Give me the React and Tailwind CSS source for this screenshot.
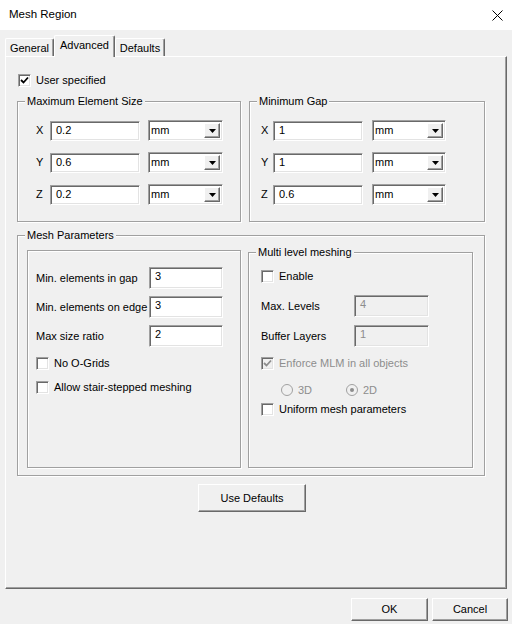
import React from 'react'

const sunken =
    'border border-t-[#a0a0a0] border-l-[#a0a0a0] border-r-white border-b-white shadow-[inset_1px_1px_0_#696969,inset_-1px_-1px_0_#e3e3e3]'
const raised =
    'border border-t-white border-l-white border-r-[#696969] border-b-[#696969] shadow-[inset_-1px_-1px_0_#a0a0a0]'
const etched = 'border border-[#a0a0a0] shadow-[inset_1px_1px_0_#fff,1px_1px_0_#fff]'

const Check = ({ checked, disabled }) => (
    <span
        className={`w-[13px] h-[13px] shrink-0 flex items-center justify-center ${sunken} ${
            disabled ? 'bg-[#f0f0f0]' : 'bg-white'
        }`}
    >
        {checked && (
            <svg width="9" height="9" viewBox="0 0 9 9">
                <path
                    d="M1 4 L3.5 6.5 L8 1.5"
                    fill="none"
                    stroke={disabled ? '#8d8d8d' : '#000'}
                    strokeWidth="1.8"
                />
            </svg>
        )}
    </span>
)

const Radio = ({ checked }) => (
    <svg width="12" height="12" viewBox="0 0 12 12" className="shrink-0">
        <circle cx="6" cy="6" r="5.5" fill="#f0f0f0" stroke="#a0a0a0" />
        {checked && <circle cx="6" cy="6" r="2" fill="#8d8d8d" />}
    </svg>
)

const Field = ({ value, w, h = 'h-[20px]', disabled }) => (
    <div
        className={`${w} ${h} ${sunken} ${
            disabled ? 'bg-[#f0f0f0] text-[#8d8d8d]' : 'bg-white'
        } pl-[5px] pt-[2px] leading-[13px] shrink-0`}
    >
        {value}
    </div>
)

const Combo = ({ w, ml }) => (
    <div className={`${w} ${ml} h-[21px] ${sunken} bg-white flex items-center shrink-0 pr-[2px]`}>
        <span className="flex-1 pl-[2px] leading-[13px]">mm</span>
        <span className={`w-[16px] h-[15px] bg-[#f0f0f0] ${raised} flex items-center justify-center`}>
            <svg width="7" height="4" viewBox="0 0 7 4">
                <path d="M0 0 H7 L3.5 4 Z" fill="#000" />
            </svg>
        </span>
    </div>
)

const Group = ({ label, className, children }) => (
    <div className={`relative ${etched} ${className}`}>
        {label && (
            <span className="absolute left-[7px] -top-[7px] px-[2px] bg-[#f0f0f0] leading-[13px]">
                {label}
            </span>
        )}
        {children}
    </div>
)

const AxisRows = ({ rows, labelW, comboW, comboMl }) => (
    <div className="flex flex-col gap-[11px]">
        {rows.map(([axis, value]) => (
            <div key={axis} className="flex items-center h-[21px]">
                <span className={labelW}>{axis}</span>
                <Field value={value} w="w-[90px]" />
                <Combo w={comboW} ml={comboMl} />
            </div>
        ))}
    </div>
)

const Tab = ({ label, active, w }) => (
    <div
        className={`${w} ${
            active ? 'h-[22px] -mb-px z-10 pt-[3px]' : 'h-[18px] pt-[3px]'
        } relative bg-[#f0f0f0] border-t border-l border-r border-t-white border-l-white border-r-[#696969] shadow-[inset_-1px_0_0_#a0a0a0] rounded-t-[2px] text-center leading-[13px]`}
    >
        {label}
    </div>
)

export default function App() {
    return (
        <div className="w-[512px] h-[624px] bg-[#f0f0f0] text-black text-[11px] font-['Liberation_Sans',Arial,sans-serif] flex flex-col overflow-hidden">
            <div className="h-[30px] bg-white flex items-center justify-between pl-[9px] pr-[9px] shrink-0">
                <span className="text-[11.5px]">Mesh Region</span>
                <svg width="11" height="11" viewBox="0 0 11 11">
                    <path d="M0.5 0.5 L10.5 10.5 M10.5 0.5 L0.5 10.5" stroke="#000" strokeWidth="1" />
                </svg>
            </div>

            <div className="flex items-end h-[21px] mt-[5px] pl-[5px]">
                <Tab label="General" w="w-[49px]" />
                <Tab label="Advanced" w="w-[61px]" active />
                <Tab label="Defaults" w="w-[50px]" />
            </div>

            <div className={`mx-[5px] h-[533px] ${raised} pl-[11px] pt-[17px] shrink-0`}>
                <div className="flex items-center gap-[5px] ml-px h-[13px]">
                    <Check checked />
                    <span>User specified</span>
                </div>

                <div className="flex gap-[8px] mt-[14px]">
                    <Group label="Maximum Element Size" className="w-[224px] h-[121px] pt-[18px] pl-[18px]">
                        <AxisRows
                            rows={[['X', '0.2'], ['Y', '0.6'], ['Z', '0.2']]}
                            labelW="w-[14px]"
                            comboW="w-[75px]"
                            comboMl="ml-[8px]"
                        />
                    </Group>
                    <Group label="Minimum Gap" className="w-[236px] h-[121px] pt-[18px] pl-[11px]">
                        <AxisRows
                            rows={[['X', '1'], ['Y', '1'], ['Z', '0.6']]}
                            labelW="w-[12px]"
                            comboW="w-[74px]"
                            comboMl="ml-[9px]"
                        />
                    </Group>
                </div>

                <Group label="Mesh Parameters" className="w-[468px] h-[241px] mt-[13px] flex items-start pt-[14px] pl-[9px] gap-[7px]">
                    <Group className="w-[214px] h-[218px] pt-[16px] pl-[8px]">
                        <div className="flex flex-col gap-[7px]">
                            {[
                                ['Min. elements in gap', '3'],
                                ['Min. elements on edge', '3'],
                                ['Max size ratio', '2'],
                            ].map(([label, value]) => (
                                <div key={label} className="flex items-center h-[22px]">
                                    <span className="w-[113px] whitespace-nowrap">{label}</span>
                                    <Field value={value} w="w-[74px]" h="h-[22px]" />
                                </div>
                            ))}
                        </div>
                        <div className="flex items-center gap-[5px] mt-[10px] h-[13px]">
                            <Check />
                            <span>No O-Grids</span>
                        </div>
                        <div className="flex items-center gap-[5px] mt-[11px] h-[13px]">
                            <Check />
                            <span>Allow stair-stepped meshing</span>
                        </div>
                    </Group>

                    <Group label="Multi level meshing" className="w-[225px] h-[216px] mt-[2px] pt-[17px] pl-[12px]">
                        <div className="flex items-center gap-[5px] h-[13px]">
                            <Check />
                            <span>Enable</span>
                        </div>
                        <div className="flex items-center h-[22px] mt-[12px]">
                            <span className="w-[93px]">Max. Levels</span>
                            <Field value="4" w="w-[75px]" h="h-[22px]" disabled />
                        </div>
                        <div className="flex items-center h-[22px] mt-[8px]">
                            <span className="w-[93px]">Buffer Layers</span>
                            <Field value="1" w="w-[75px]" h="h-[22px]" disabled />
                        </div>
                        <div className="flex items-center gap-[5px] mt-[10px] h-[13px] text-[#8d8d8d]">
                            <Check checked disabled />
                            <span>Enforce MLM in all objects</span>
                        </div>
                        <div className="flex items-center h-[12px] mt-[14px] ml-[20px] text-[#8d8d8d]">
                            <Radio />
                            <span className="ml-[5px] w-[48px]">3D</span>
                            <Radio checked />
                            <span className="ml-[5px]">2D</span>
                        </div>
                        <div className="flex items-center gap-[5px] mt-[7px] h-[13px]">
                            <Check />
                            <span>Uniform mesh parameters</span>
                        </div>
                    </Group>
                </Group>

                <button
                    className={`ml-[181px] mt-[8px] w-[108px] h-[28px] bg-[#f0f0f0] ${raised} leading-[13px]`}
                >
                    Use Defaults
                </button>
            </div>

            <div className="flex justify-end gap-[4px] pr-[4px] mt-[9px]">
                <button className={`w-[77px] h-[23px] bg-[#f0f0f0] ${raised} leading-[13px]`}>OK</button>
                <button className={`w-[76px] h-[23px] bg-[#f0f0f0] ${raised} leading-[13px]`}>Cancel</button>
            </div>
        </div>
    )
}
